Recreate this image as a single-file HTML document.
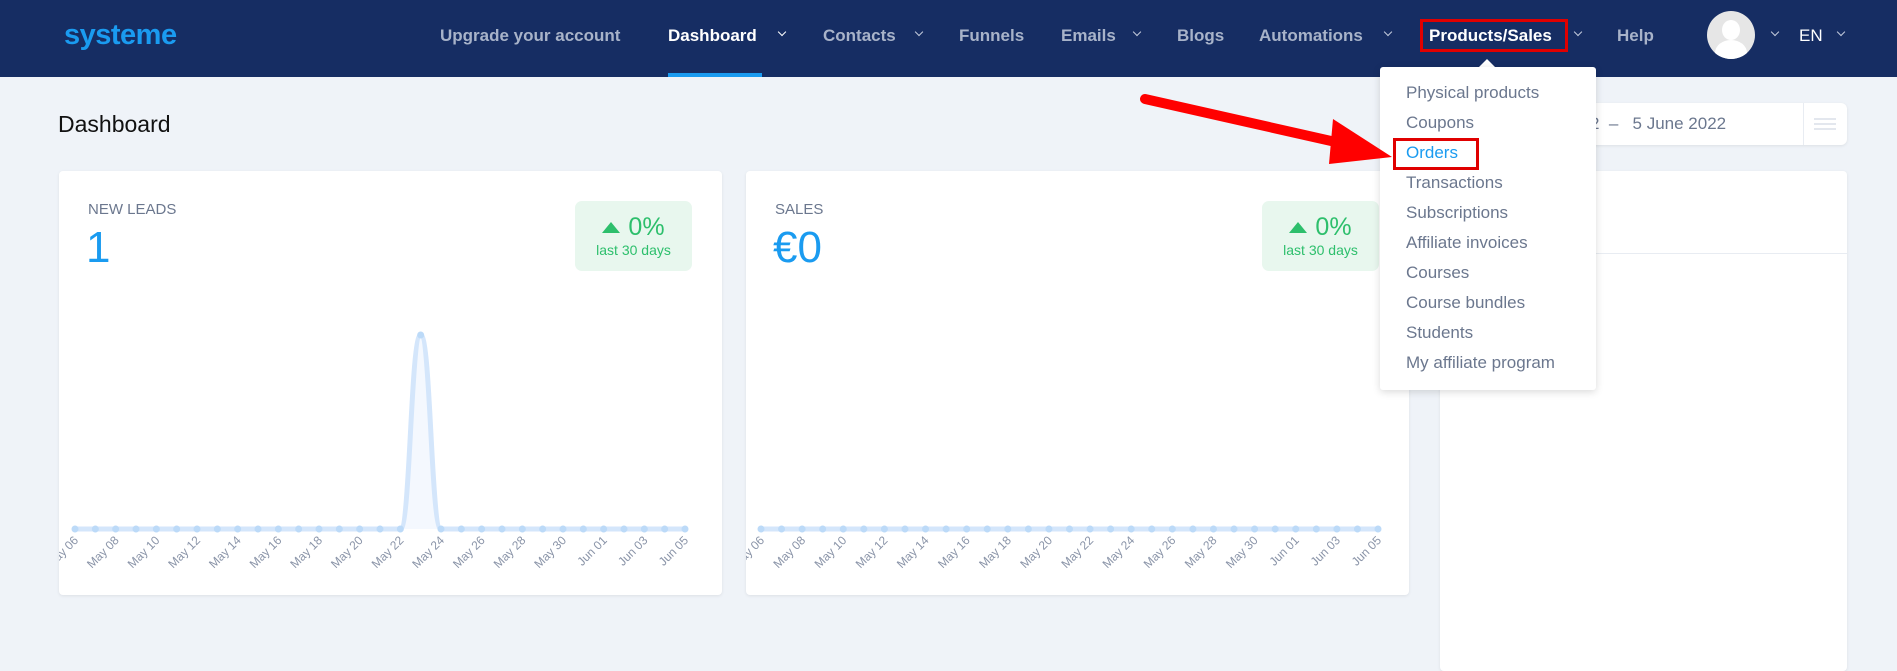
<!DOCTYPE html>
<html><head><meta charset="utf-8"><style>
*{margin:0;padding:0;box-sizing:border-box}
body{width:1897px;height:661px;overflow:hidden;background:#eff3f8;font-family:"Liberation Sans",sans-serif;position:relative}
.hdr{position:absolute;left:0;top:0;width:1897px;height:77px;background:#162d63}
.logo{position:absolute;left:64px;top:19px;font-size:29px;font-weight:bold;color:#1a9bf0;letter-spacing:-0.5px}
.nav{position:absolute;top:26px;font-size:17px;color:#a8b3c9;font-weight:bold;white-space:nowrap}
.nav.w{color:#fff}
.chev{position:absolute;top:29px;width:6px;height:6px;border-right:1.5px solid #c3cbdc;border-bottom:1.5px solid #c3cbdc;transform:rotate(45deg)}
.ul{position:absolute;left:668px;top:73px;width:94px;height:4px;background:#1a9bf0}
.title{position:absolute;left:58px;top:111px;font-size:23px;color:#111}
.card{position:absolute;background:#fff;border-radius:4px;box-shadow:0 1px 3px rgba(0,0,0,.08)}
.lbl{position:absolute;font-size:15px;color:#6b778e}
.big{position:absolute;font-size:44px;color:#1a9bf0;font-weight:300}
.badge{position:absolute;width:117px;height:70px;background:#e8f7ee;border-radius:7px;text-align:center;color:#2dbf6c}
.badge b{display:block;font-size:25px;font-weight:normal;margin-top:12px}
.badge b:before{content:"";display:inline-block;border-left:9px solid transparent;border-right:9px solid transparent;border-bottom:11px solid #2dbf6c;margin-right:8px;vertical-align:2px}
.badge span{font-size:14px}
.dd{position:absolute;left:1380px;top:67px;width:216px;height:323px;background:#fff;border-radius:3px;box-shadow:0 2px 8px rgba(0,0,0,.15)}
.dd div{position:absolute;left:26px;font-size:17px;color:#6b778e;white-space:nowrap}
</style></head><body>
<div class="hdr"></div>
<div class="logo">systeme</div>
<div class="nav" style="left:440px">Upgrade your account</div>
<div class="nav w" style="left:668px">Dashboard</div><div class="chev" style="left:779px;border-color:#fff"></div>
<div class="nav" style="left:823px">Contacts</div><div class="chev" style="left:916px"></div>
<div class="nav" style="left:959px">Funnels</div>
<div class="nav" style="left:1061px">Emails</div><div class="chev" style="left:1134px"></div>
<div class="nav" style="left:1177px">Blogs</div>
<div class="nav" style="left:1259px">Automations</div><div class="chev" style="left:1385px"></div>
<div style="position:absolute;left:1420px;top:19px;width:148px;height:33px;border:3px solid #e00000"></div>
<div class="nav w" style="left:1429px">Products/Sales</div><div class="chev" style="left:1575px"></div>
<div class="nav" style="left:1617px">Help</div>
<div style="position:absolute;left:1707px;top:11px;width:48px;height:48px;border-radius:50%;background:#e6e6e6;overflow:hidden"><div style="position:absolute;left:15px;top:9px;width:18px;height:20px;border-radius:50%;background:#fff"></div><div style="position:absolute;left:8px;top:29px;width:32px;height:26px;border-radius:50% 50% 0 0;background:#fff"></div></div>
<div class="chev" style="left:1772px"></div>
<div class="nav w" style="left:1799px;font-weight:normal">EN</div><div class="chev" style="left:1838px"></div>
<div class="ul"></div>
<div class="title">Dashboard</div>

<div class="card" style="left:1440px;top:103px;width:407px;height:42px;border-radius:6px"><div style="position:absolute;left:150px;top:11px;font-size:17px;color:#6b778e">2 &nbsp;– &nbsp; 5 June 2022</div><div style="position:absolute;left:363px;top:0;width:1px;height:42px;background:#e8ecf2"></div><div style="position:absolute;left:374px;top:15px;width:22px;height:2px;background:#e3e7ee;box-shadow:0 5px 0 #e3e7ee,-0px 10px 0 #e3e7ee"></div></div>

<div class="card" style="left:59px;top:171px;width:663px;height:424px">
<div class="lbl" style="left:29px;top:30px">NEW LEADS</div><div class="big" style="left:27px;top:52px">1</div>
<div class="badge" style="left:516px;top:30px"><b>0%</b><span>last 30 days</span></div>
<svg id="c1" width="663" height="424" style="position:absolute;left:0;top:0"></svg></div>
<div class="card" style="left:746px;top:171px;width:663px;height:424px">
<div class="lbl" style="left:29px;top:30px">SALES</div><div class="big" style="left:27px;top:52px">€0</div>
<div class="badge" style="left:516px;top:30px"><b>0%</b><span>last 30 days</span></div>
<svg id="c2" width="663" height="424" style="position:absolute;left:0;top:0"></svg></div>
<div class="card" style="left:1440px;top:171px;width:407px;height:500px"><div style="position:absolute;left:0;top:82px;width:407px;height:1px;background:#e8ecf2"></div></div>

<div style="position:absolute;left:1478px;top:59px;width:0;height:0;border-left:9px solid transparent;border-right:9px solid transparent;border-bottom:9px solid #fff"></div>
<div class="dd">
<div style="top:16px">Physical products</div><div style="top:46px">Coupons</div>
<div style="top:76px;color:#1a9bf0">Orders</div><div style="top:106px">Transactions</div>
<div style="top:136px">Subscriptions</div><div style="top:166px">Affiliate invoices</div>
<div style="top:196px">Courses</div><div style="top:226px">Course bundles</div>
<div style="top:256px">Students</div><div style="top:286px">My affiliate program</div>
</div>
<div style="position:absolute;left:1393px;top:138px;width:86px;height:32px;border:3px solid #e00000"></div>
<svg width="1897" height="661" style="position:absolute;left:0;top:0"><line x1="1145" y1="99" x2="1340" y2="143" stroke="#f00" stroke-width="10" stroke-linecap="round"/><polygon points="1333,119 1392,157 1329,164" fill="#f00"/></svg>
<script>
function chart(id,x0,x1,peak){var s=document.getElementById(id),h='',n=31,by=358,py=164,st=(x1-x0)/30;
var pts=[];for(var i=0;i<n;i++){pts.push([x0+i*st,(peak&&i==17)?py:by]);}
var d='M'+pts[0][0]+' '+by;for(i=1;i<n;i++){var p=pts[i-1],q=pts[i];var mx=(p[0]+q[0])/2;d+=' C'+mx+' '+p[1]+' '+mx+' '+q[1]+' '+q[0]+' '+q[1];}
h+='<path d="'+d+' L'+pts[n-1][0]+' '+by+' Z" fill="#f4f8fe"/>';
h+='<path d="'+d+'" fill="none" stroke="#d4e6fb" stroke-width="5"/>';
for(i=0;i<n;i++)h+='<circle cx="'+pts[i][0]+'" cy="'+pts[i][1]+'" r="3.5" fill="#bcdaf8"/>';
var m=['May 06','May 08','May 10','May 12','May 14','May 16','May 18','May 20','May 22','May 24','May 26','May 28','May 30','Jun 01','Jun 03','Jun 05'];
for(i=0;i<16;i++){var x=x0+i*2*st+4,y=370;h+='<text x="'+x+'" y="'+y+'" transform="rotate(-45 '+x+' '+y+')" text-anchor="end" font-size="12" fill="#8a94a8" font-family="Liberation Sans">'+m[i]+'</text>';}
s.innerHTML=h;}
chart('c1',16,626,true);chart('c2',15,632,false);
</script>
</body></html>
